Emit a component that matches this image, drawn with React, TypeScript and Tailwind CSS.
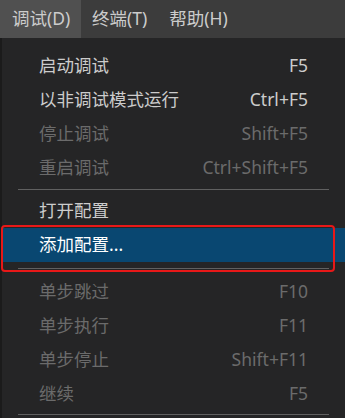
import React from 'react'

type Item = { label: string; shortcut?: string; disabled?: boolean; active?: boolean }

const font = { fontFamily: '"Noto Sans", "Noto Sans CJK SC", sans-serif' }

function Row({ label, shortcut, disabled, active }: Item) {
  return (
    <div
      className={
        'flex h-[34px] items-center justify-between pl-[37px] pr-[37px] ' +
        (active ? 'bg-[#094771] text-white' : disabled ? 'text-[#6b6b6b]' : 'text-[#cccccc]')
      }
    >
      <span>{label}</span>
      {shortcut && <span>{shortcut}</span>}
    </div>
  )
}

function Separator({ top, bottom }: { top: string; bottom: string }) {
  return (
    <div className={top + ' ' + bottom + ' px-4'}>
      <div className="h-px bg-[#606060]" />
    </div>
  )
}

export default function App() {
  return (
    <div className="relative h-[418px] w-[345px] overflow-hidden bg-[#252526] text-[17.5px] leading-none" style={font}>
      {/* Menu bar */}
      <div className="flex h-[38px] items-stretch bg-[#3c3c3c] text-[#cccccc]">
        <div className="flex w-[81px] items-center bg-[#505050] pl-3">调试(D)</div>
        <div className="flex items-center pl-[11px] pr-[11px]">终端(T)</div>
        <div className="flex items-center pl-[11px]">帮助(H)</div>
      </div>

      {/* Dropdown */}
      <div className="border-l-2 border-[#1b1b1b] pt-[11px]">
        <Row label="启动调试" shortcut="F5" />
        <Row label="以非调试模式运行" shortcut="Ctrl+F5" />
        <Row label="停止调试" shortcut="Shift+F5" disabled />
        <Row label="重启调试" shortcut="Ctrl+Shift+F5" disabled />
        <Separator top="pt-[4px]" bottom="pb-[4px]" />
        <Row label="打开配置" />
        <Row label="添加配置..." active />
        <Separator top="pt-[6px]" bottom="pb-[6px]" />
        <Row label="单步跳过" shortcut="F10" disabled />
        <Row label="单步执行" shortcut="F11" disabled />
        <Row label="单步停止" shortcut="Shift+F11" disabled />
        <Row label="继续" shortcut="F5" disabled />
        <Separator top="pt-[3px]" bottom="pb-[3px]" />
      </div>

      {/* Red annotation box */}
      <div className="absolute left-[1px] top-[225px] h-[47px] w-[334px] rounded-[4px] border-2 border-[#e81818]" />
    </div>
  )
}
